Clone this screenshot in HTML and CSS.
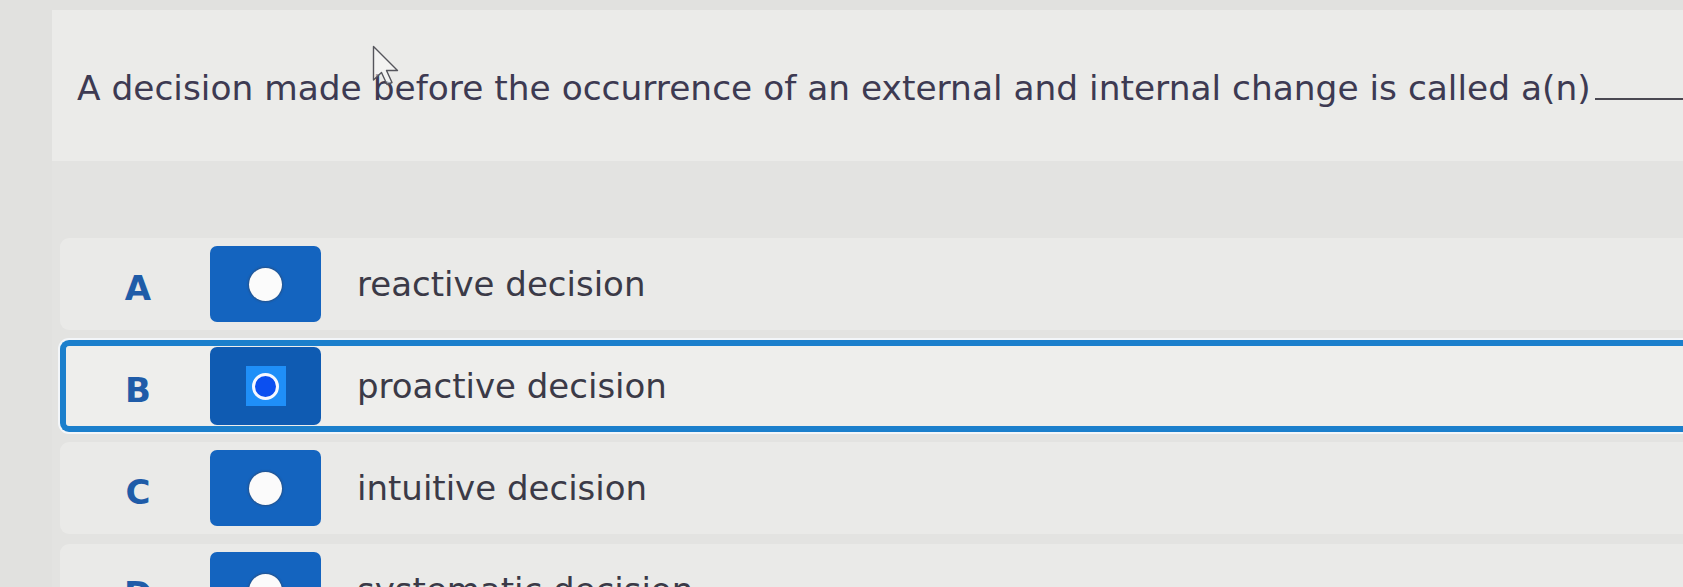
FILE: index.html
```html
<!DOCTYPE html>
<html lang="en">
<head>
<meta charset="utf-8">
<title>Question</title>
<link rel="stylesheet" href="styles.css">
</head>
<body>
<div class="page">
  <div class="panel">
    <div class="question">
      <p class="prompt">A decision made before the occurrence of an external and internal change is called a(n)<span class="blank"></span></p>
    </div>
    <div class="options">
      <div class="row">
        <div class="letter">A</div>
        <div class="radio-box"><span class="dot"></span></div>
        <div class="answer">reactive decision</div>
      </div>
      <div class="row selected">
        <div class="letter">B</div>
        <div class="radio-box"><span class="focus"><span class="dot checked"></span></span></div>
        <div class="answer">proactive decision</div>
      </div>
      <div class="row">
        <div class="letter">C</div>
        <div class="radio-box"><span class="dot"></span></div>
        <div class="answer">intuitive decision</div>
      </div>
      <div class="row">
        <div class="letter">D</div>
        <div class="radio-box"><span class="dot"></span></div>
        <div class="answer">systematic decision</div>
      </div>
    </div>
  </div>
</div>
<svg class="cursor" width="30" height="42" viewBox="0 0 30 42" aria-hidden="true">
  <path d="M1.5 1.5 L1.5 35 L9.5 27.5 L15 39.5 L20 37.5 L14.5 25.5 L25.5 25.5 Z" fill="rgba(250,250,250,0.55)" stroke="#55555c" stroke-width="1.4" stroke-linejoin="round"/>
</svg>
</body>
</html>
```
FILE: styles.css
```css
html, body {
  margin: 0;
  padding: 0;
}
body {
  width: 1683px;
  height: 587px;
  overflow: hidden;
  background: #e1e1df;
  font-family: "DejaVu Sans", "Liberation Sans", sans-serif;
  position: relative;
}
.page {
  padding: 10px 0 0 52px;
}
.panel {
  background: #e3e3e1;
  min-height: 600px;
}
.question {
  background: #ebebe9;
  height: 151px;
  padding: 58px 0 0 25px;
  box-sizing: border-box;
}
.prompt {
  margin: 0;
  font-size: 34.4px;
  line-height: 40px;
  color: #3d3a52;
  white-space: nowrap;
}
.blank {
  display: inline-block;
  width: 120px;
  height: 2px;
  margin-left: 4px;
  background: #4a4852;
  vertical-align: baseline;
}
.options {
  padding: 77px 0 0 8px;
  display: flex;
  flex-direction: column;
  gap: 10px;
}
.row {
  height: 92px;
  box-sizing: border-box;
  border: 6px solid transparent;
  border-right: none;
  border-radius: 9px 0 0 9px;
  background: #eaeae8;
  display: flex;
  align-items: center;
}
.row.selected {
  border-color: #1b7fcc;
  background: #eeeeec;
  box-shadow: 0 0 0 2px #f3f6f9;
}
.letter {
  width: 144px;
  text-align: center;
  font-weight: bold;
  font-size: 34px;
  line-height: 40px;
  color: #1f5ca8;
  padding-top: 8px;
}
.radio-box {
  width: 111px;
  height: 76px;
  border-radius: 7px;
  background: #1464bf;
  display: flex;
  align-items: center;
  justify-content: center;
  margin-right: 36px;
  flex: none;
}
.selected .radio-box {
  background: #0f5bb2;
  height: 78px;
}
.dot {
  width: 33px;
  height: 33px;
  border-radius: 50%;
  background: #fbfbfb;
  box-shadow: 0 0 2px 1px rgba(60,60,70,0.45);
}
.focus {
  width: 40px;
  height: 40px;
  background: #1f8ff8;
  display: flex;
  align-items: center;
  justify-content: center;
}
.dot.checked {
  width: 21px;
  height: 21px;
  background: #0b4ff0;
  border: 3px solid #f6f8ff;
  box-shadow: none;
}
.answer {
  font-size: 34px;
  line-height: 40px;
  color: #3b3a47;
  white-space: nowrap;
}
.cursor {
  position: absolute;
  left: 372px;
  top: 45px;
}
```
